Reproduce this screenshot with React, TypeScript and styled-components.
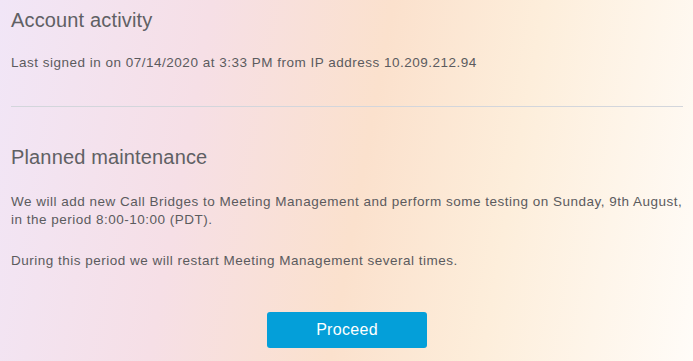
import styled, { createGlobalStyle } from "styled-components";

const Global = createGlobalStyle`
  html, body {
    margin: 0;
    padding: 0;
  }
  body {
    font-family: "Liberation Sans", Arial, sans-serif;
    color: #5b5b5e;
  }
`;

const Page = styled.div`
  width: 693px;
  height: 361px;
  box-sizing: border-box;
  padding: 7px 10px 0 11px;
  background: linear-gradient(100deg, #f1e6f7 0%, #f6dfe6 28%, #fbe1cd 52%, #fdeedb 72%, #fffcf8 100%);
  display: flex;
  flex-direction: column;
  overflow: hidden;
`;

const Heading = styled.h2`
  margin: 0;
  font-size: 20px;
  font-weight: 400;
  line-height: 26px;
  letter-spacing: 0.15px;
  color: #606064;
`;

const Text = styled.p<{ $gap?: number }>`
  margin: ${(p) => p.$gap ?? 0}px 0 0;
  font-size: 13.5px;
  line-height: 18px;
  letter-spacing: 0.5px;
  white-space: nowrap;
`;

const Divider = styled.hr`
  margin: 34px 0 0;
  border: 0;
  border-top: 1px solid #d3d6dc;
`;

const Section = styled.section`
  margin-top: 37px;
`;

const Actions = styled.div`
  display: flex;
  justify-content: center;
  margin-top: 42px;
`;

const Button = styled.button`
  width: 160px;
  height: 36px;
  border: 0;
  border-radius: 3px;
  background: #049fd9;
  color: #fff;
  font-family: "Liberation Sans", Arial, sans-serif;
  font-size: 16px;
  letter-spacing: 0.3px;
  cursor: pointer;
`;

export default function App() {
  return (
    <>
      <Global />
      <Page>
        <Heading>Account activity</Heading>
        <Text $gap={21}>
          Last signed in on 07/14/2020 at 3:33 PM from IP address 10.209.212.94
        </Text>
        <Divider />
        <Section>
          <Heading>Planned maintenance</Heading>
          <Text $gap={23}>
            We will add new Call Bridges to Meeting Management and perform some testing on Sunday, 9th August,
            <br />
            in the period 8:00-10:00 (PDT).
          </Text>
          <Text $gap={23}>During this period we will restart Meeting Management several times.</Text>
        </Section>
        <Actions>
          <Button>Proceed</Button>
        </Actions>
      </Page>
    </>
  );
}
